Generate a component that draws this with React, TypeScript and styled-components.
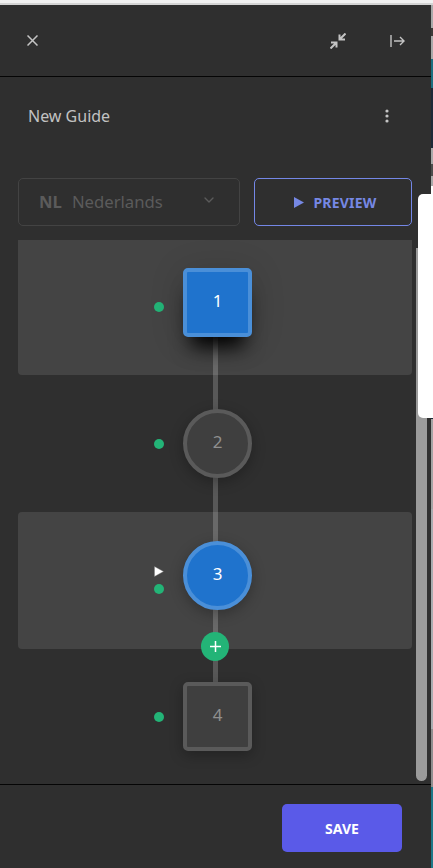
import React, { FC } from 'react';
import styled, { createGlobalStyle } from 'styled-components';
import { FiChevronDown } from 'react-icons/fi';

const GlobalStyle = createGlobalStyle`
  html, body {
    margin: 0;
    padding: 0;
    height: 100%;
    overflow: hidden;
    background: #d8d8d8;
  }
  * {
    box-sizing: border-box;
  }
`;

const Page = styled.div`
  position: relative;
  display: flex;
  flex-direction: column;
  width: 433px;
  height: 868px;
  overflow: hidden;
  font-family: 'Noto Sans', 'Open Sans', sans-serif;
`;

const TopStrip = styled.div`
  height: 5px;
  flex: none;
  background: linear-gradient(#f1f1f1 0 3px, #d4d4d4 3px);
`;

const Main = styled.div`
  display: flex;
  flex: 1;
  min-height: 0;
`;

const Panel = styled.div`
  display: flex;
  flex-direction: column;
  width: 431px;
  background: #2f2f2f;
`;

const Sliver = styled.div`
  display: flex;
  flex-direction: column;
  width: 2px;
`;

const SliverPart = styled.div<{ $h: number; $c: string }>`
  height: ${(p) => p.$h}px;
  flex: none;
  background: ${(p) => p.$c};
`;

const TopBar = styled.div`
  display: flex;
  align-items: center;
  height: 72px;
  flex: none;
  padding: 0 26px 0 27px;
  border-bottom: 1px solid #050505;
`;

const TopActions = styled.div`
  display: flex;
  align-items: center;
  gap: 44px;
  margin-left: auto;
`;

const IconButton = styled.button`
  display: flex;
  padding: 0;
  border: 0;
  background: none;
  color: #c4c4c4;
`;

const TitleRow = styled.div`
  display: flex;
  align-items: center;
  justify-content: space-between;
  height: 78px;
  flex: none;
  padding: 0 42px 0 28px;
`;

const Title = styled.h1`
  margin: 0;
  font-size: 16px;
  font-weight: 400;
  color: #c2c2c2;
`;

const Controls = styled.div`
  display: flex;
  gap: 14px;
  flex: none;
  padding: 23px 19px 14px 18px;
`;

const LangSelect = styled.div`
  display: flex;
  align-items: center;
  width: 222px;
  height: 48px;
  padding: 0 22px 2px 20px;
  border: 1px solid #434343;
  border-radius: 5px;
  font-size: 16.7px;
  color: #5b5b5b;
`;

const LangCode = styled.span`
  margin-right: 10px;
  font-weight: 700;
`;

const LangChevron = styled(FiChevronDown)`
  margin-left: auto;
  margin-top: -2px;
  font-size: 16px;
`;

const PreviewButton = styled.button`
  display: flex;
  align-items: center;
  justify-content: center;
  gap: 9px;
  width: 158px;
  height: 48px;
  padding: 0 0 0 5px;
  border: 1px solid #7487e6;
  border-radius: 5px;
  background: none;
  font-family: inherit;
  font-size: 14px;
  font-weight: 700;
  letter-spacing: 0.2px;
  color: #7688e4;
`;

const StepArea = styled.div`
  position: relative;
  flex: 1;
  min-height: 0;
  padding: 0 19px 0 18px;
`;

const StepList = styled.div`
  position: relative;
  display: flex;
  flex-direction: column;
`;

const Connector = styled.div`
  position: absolute;
  z-index: 1;
  top: 90px;
  left: 195px;
  width: 5px;
  height: 360px;
  background: rgba(255, 255, 255, 0.2);
`;

const StepRow = styled.div<{ $active?: boolean; $height: number; $offset: number }>`
  position: relative;
  display: flex;
  height: ${(p) => p.$height}px;
  padding: ${(p) => p.$offset}px 0 0 136px;
  border-radius: 0 0 4px 4px;
  background: ${(p) => (p.$active ? '#444444' : 'transparent')};
`;

const RoundedRow = styled(StepRow)`
  border-radius: 4px;
`;

const Marker = styled.div<{ $drop?: number }>`
  display: flex;
  flex-direction: column;
  align-items: center;
  justify-content: center;
  gap: 7px;
  width: 10px;
  height: 69px;
  margin: ${(p) => p.$drop || 0}px 19px 0 0;
`;

const Dot = styled.span`
  width: 10px;
  height: 10px;
  flex: none;
  border-radius: 50%;
  background: #23b477;
`;

const Node = styled.div<{ $round?: boolean; $selected?: boolean; $lifted?: boolean }>`
  position: relative;
  z-index: 2;
  display: flex;
  align-items: center;
  justify-content: center;
  width: 69px;
  height: 69px;
  padding-bottom: 5px;
  border: 4px solid ${(p) => (p.$selected ? '#4a8fd8' : '#5a5a5a')};
  border-radius: ${(p) => (p.$round ? '50%' : '5px')};
  background: ${(p) => (p.$selected ? '#1f73cd' : '#3f3f3f')};
  font-size: 17px;
  color: ${(p) => (p.$selected ? '#ffffff' : '#8f8f8f')};
  box-shadow: ${(p) =>
    p.$lifted
      ? '0 18px 20px -8px rgba(0, 0, 0, 1), 0 4px 34px rgba(0, 0, 0, 0.16)'
      : '0 4px 14px rgba(0, 0, 0, 0.28)'};
`;

const AddButton = styled.button`
  position: absolute;
  z-index: 3;
  top: 120px;
  left: 183px;
  display: flex;
  align-items: center;
  justify-content: center;
  width: 28px;
  height: 29px;
  padding: 0;
  border: 0;
  border-radius: 50%;
  background: #23b477;
  color: #ffffff;
`;

const Scrollbar = styled.div`
  position: absolute;
  top: 8px;
  right: 4px;
  bottom: 3px;
  width: 11px;
  border-radius: 0 0 6px 6px;
  background: #9b9b9b;
`;

const Footer = styled.div`
  display: flex;
  justify-content: flex-end;
  height: 84px;
  flex: none;
  padding: 19px 29px 0 0;
  border-top: 1px solid #050505;
`;

const SaveButton = styled.button`
  width: 120px;
  height: 48px;
  padding: 0;
  border: 0;
  border-radius: 5px;
  background: #5a5ae8;
  font-family: inherit;
  font-size: 14px;
  font-weight: 700;
  color: #ffffff;
`;

const Popup = styled.div`
  position: absolute;
  z-index: 5;
  top: 194px;
  left: 418px;
  width: 15px;
  height: 224px;
  border-radius: 5px 0 0 5px;
  background: #ffffff;
`;

const sliverParts = [
  { h: 23, c: '#a9a9a9' },
  { h: 8, c: '#3d3a38' },
  { h: 23, c: '#a9a9a9' },
  { h: 29, c: '#1c6f80' },
  { h: 60, c: '#1d2a38' },
  { h: 16, c: '#a9a9a9' },
  { h: 12, c: '#4d4d4d' },
  { h: 10, c: '#a9a9a9' },
  { h: 225, c: '#ffffff' },
  { h: 8, c: '#1d2a38' },
  { h: 90, c: '#a5a5a5' },
  { h: 220, c: '#a9adb0' },
  { h: 58, c: '#8f8f8f' },
  { h: 81, c: '#1c7787' },
];

const CloseIcon = () => (
  <svg width="11" height="11" viewBox="0 0 11 11" fill="none" stroke="currentColor" strokeWidth="1.5">
    <path d="M.5.5l10 10M10.5.5l-10 10" />
  </svg>
);

const CollapseIcon = () => (
  <svg width="16" height="16" viewBox="0 0 16 16" fill="none" stroke="currentColor" strokeWidth="2">
    <path d="M15.5.5l-6 6M9.5 1.5V6.5H15" />
    <path d="M.5 15.5l6-6M1 9.5H6.5V14.5" />
  </svg>
);

const ExpandOutIcon = () => (
  <svg width="15" height="12" viewBox="0 0 15 12" fill="none" stroke="currentColor" strokeWidth="1.4">
    <path d="M1 0v12M4 6h10M10 2l4 4-4 4" />
  </svg>
);

const KebabIcon = () => (
  <svg width="4" height="14" viewBox="0 0 4 14" fill="currentColor">
    <circle cx="2" cy="2" r="1.6" />
    <circle cx="2" cy="7" r="1.6" />
    <circle cx="2" cy="12" r="1.6" />
  </svg>
);

const PlayIcon = () => (
  <svg width="10" height="11" viewBox="0 0 10 11" fill="currentColor">
    <path d="M0 0l10 5.5L0 11z" />
  </svg>
);

const CurrentArrow = () => (
  <svg width="10" height="11" viewBox="0 0 10 11" fill="#ffffff" stroke="#777777" strokeWidth="0.4">
    <path d="M.5.5l9 5-9 5z" />
  </svg>
);

const PlusIcon = () => (
  <svg width="11" height="11" viewBox="0 0 11 11" fill="none" stroke="currentColor" strokeWidth="1.5">
    <path d="M5.5 0v11M0 5.5h11" />
  </svg>
);

const App: FC = () => (
  <Page>
    <GlobalStyle />
    <TopStrip />
    <Main>
      <Panel>
        <TopBar>
          <IconButton aria-label="close">
            <CloseIcon />
          </IconButton>
          <TopActions>
            <IconButton aria-label="collapse">
              <CollapseIcon />
            </IconButton>
            <IconButton aria-label="dock">
              <ExpandOutIcon />
            </IconButton>
          </TopActions>
        </TopBar>

        <TitleRow>
          <Title>New Guide</Title>
          <IconButton aria-label="more">
            <KebabIcon />
          </IconButton>
        </TitleRow>

        <Controls>
          <LangSelect>
            <LangCode>NL</LangCode>
            Nederlands
            <LangChevron />
          </LangSelect>
          <PreviewButton>
            <PlayIcon />
            PREVIEW
          </PreviewButton>
        </Controls>

        <StepArea>
          <StepList>
            <Connector />
            <StepRow $active $height={135} $offset={28}>
              <Marker $drop={4}>
                <Dot />
              </Marker>
              <Node $selected $lifted>
                1
              </Node>
            </StepRow>
            <StepRow $height={137} $offset={34}>
              <Marker>
                <Dot />
              </Marker>
              <Node $round>2</Node>
            </StepRow>
            <RoundedRow $active $height={137} $offset={29}>
              <Marker $drop={4}>
                <CurrentArrow />
                <Dot />
              </Marker>
              <Node $round $selected>
                3
              </Node>
              <AddButton aria-label="add step">
                <PlusIcon />
              </AddButton>
            </RoundedRow>
            <StepRow $height={135} $offset={33}>
              <Marker>
                <Dot />
              </Marker>
              <Node>4</Node>
            </StepRow>
          </StepList>
          <Scrollbar />
        </StepArea>

        <Footer>
          <SaveButton>SAVE</SaveButton>
        </Footer>
      </Panel>
      <Sliver>
        {sliverParts.map((part, i) => (
          <SliverPart key={i} $h={part.h} $c={part.c} />
        ))}
      </Sliver>
    </Main>
    <Popup />
  </Page>
);

export default App;
